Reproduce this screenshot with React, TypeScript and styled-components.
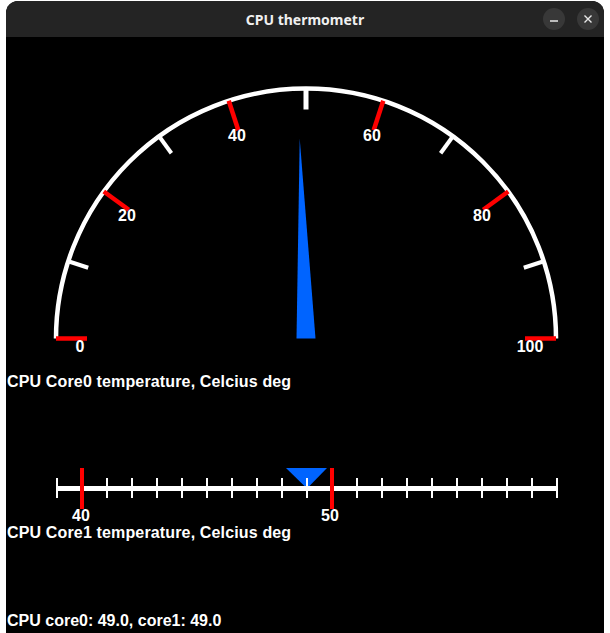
import React from 'react';
import styled, {createGlobalStyle} from 'styled-components';

const GlobalStyle = createGlobalStyle`
  html, body {
    margin: 0;
    padding: 0;
    background: #ffffff;
    height: 100%;
    overflow: hidden;
  }
  #root {
    height: 100%;
  }
`;

const Window = styled.div`
  margin: 1px 6px 0 6px;
  width: 598px;
  height: 632px;
  display: flex;
  flex-direction: column;
  background: #000000;
  border-radius: 12px 12px 0 0;
  overflow: hidden;
`;

const TitleBar = styled.div`
  position: relative;
  height: 36px;
  flex: none;
  display: flex;
  align-items: center;
  justify-content: flex-end;
  padding-right: 5px;
  gap: 12px;
  background: #242424;
  box-sizing: border-box;
`;

const Title = styled.div`
  position: absolute;
  left: 0;
  right: 0;
  top: 0;
  bottom: 0;
  display: flex;
  align-items: center;
  justify-content: center;
  font-family: 'Noto Sans', 'DejaVu Sans', sans-serif;
  font-weight: 700;
  font-size: 14px;
  color: #f0f0f0;
  pointer-events: none;
`;

const ControlButton = styled.button`
  position: relative;
  width: 22px;
  height: 22px;
  border-radius: 50%;
  border: none;
  padding: 0;
  background: #383838;
  display: flex;
  align-items: center;
  justify-content: center;
  color: #e8e8e8;
`;

const Content = styled.div`
  flex: 1;
  display: flex;
  flex-direction: column;
  background: #000000;
`;

const Canvas = styled.svg<{$h: number}>`
  display: block;
  width: 598px;
  height: ${p => p.$h}px;
  flex: none;
  overflow: visible;
`;

const Caption = styled.div<{$gap?: number}>`
  margin-top: ${p => p.$gap ?? 0}px;
  padding-left: 1px;
  height: 18px;
  line-height: 18px;
  font-family: 'Liberation Sans', Arial, sans-serif;
  font-weight: 700;
  font-size: 16px;
  letter-spacing: 0.15px;
  color: #ffffff;
  white-space: nowrap;
`;

const Status = styled(Caption)`
  letter-spacing: 0;
`;

const Label = styled.text`
  font-family: 'Liberation Sans', Arial, sans-serif;
  font-weight: 700;
  font-size: 16px;
  fill: #ffffff;
`;

const CX = 306;
const CY = 338.5;
const R = 250;
const BLUE = '#0064ff';
const RED = '#ff0000';

const polar = (value: number, r: number) => {
  const a = ((180 - value * 1.8) * Math.PI) / 180;
  return {x: CX + r * Math.cos(a), y: CY - r * Math.sin(a)};
};

const gaugeLabels = [
  {v: 0, x: 80, y: 352},
  {v: 20, x: 127, y: 221},
  {v: 40, x: 237, y: 141},
  {v: 60, x: 372, y: 141},
  {v: 80, x: 482, y: 221},
  {v: 100, x: 530, y: 352},
];

const Gauge: React.FC<{value: number}> = ({value}) => {
  const tip = polar(value, 200);
  const ticks = [0, 10, 20, 30, 40, 50, 60, 70, 80, 90, 100];
  return (
    <Canvas $h={336} viewBox="6 37 598 336">
      <path
        d={`M ${CX - R} ${CY} A ${R} ${R} 0 0 1 ${CX + R} ${CY}`}
        fill="none"
        stroke="#ffffff"
        strokeWidth={4.5}
      />
      {ticks.map(t => {
        const major = t % 20 === 0;
        const a = polar(t, R);
        const b = polar(t, major ? R - 31 : R - 21);
        return (
          <line
            key={t}
            x1={a.x}
            y1={a.y}
            x2={b.x}
            y2={b.y}
            stroke={major ? RED : '#ffffff'}
            strokeWidth={major ? 4.5 : t === 50 ? 5 : 4}
          />
        );
      })}
      {gaugeLabels.map(l => (
        <Label key={l.v} x={l.x} y={l.y} textAnchor="middle">
          {l.v}
        </Label>
      ))}
      <polygon
        points={`${CX - 9.5},${CY} ${CX + 9.5},${CY} ${tip.x},${tip.y}`}
        fill={BLUE}
      />
    </Canvas>
  );
};

const LinearScale: React.FC<{value: number}> = ({value}) => {
  const x0 = 57;
  const step = 25;
  const min = 39;
  const lineY = 488.5;
  const px = x0 + (value - min) * step;
  const ticks = Array.from({length: 21}, (_, i) => min + i);
  return (
    <Canvas $h={133} viewBox="6 391 598 133">
      <polygon
        points={`${px - 21},468 ${px + 20},468 ${px},${lineY}`}
        fill={BLUE}
      />
      <line
        x1={x0}
        y1={lineY}
        x2={x0 + 20 * step}
        y2={lineY}
        stroke="#ffffff"
        strokeWidth={5}
      />
      {ticks.map((t, i) => {
        const x = x0 + i * step;
        const major = t % 10 === 0;
        return major ? (
          <line key={t} x1={x} y1={468} x2={x} y2={509} stroke={RED} strokeWidth={4} />
        ) : (
          <line key={t} x1={x} y1={478} x2={x} y2={498} stroke="#ffffff" strokeWidth={2} />
        );
      })}
      <Label x={81} y={521} textAnchor="middle">
        40
      </Label>
      <Label x={330} y={521} textAnchor="middle">
        50
      </Label>
    </Canvas>
  );
};

export default function App() {
  const core0 = 49.0;
  const core1 = 49.0;
  return (
    <>
      <GlobalStyle />
      <Window>
        <TitleBar>
          <Title>CPU thermometr</Title>
          <ControlButton aria-label="minimize">
            <svg width="10" height="10" viewBox="0 0 10 10">
              <line x1="1" y1="7" x2="9" y2="7" stroke="currentColor" strokeWidth="1.6" />
            </svg>
          </ControlButton>
          <ControlButton aria-label="close">
            <svg width="10" height="10" viewBox="0 0 10 10">
              <path d="M1.5 1.5 L8.5 8.5 M8.5 1.5 L1.5 8.5" stroke="currentColor" strokeWidth="1.4" />
            </svg>
          </ControlButton>
        </TitleBar>
        <Content>
          <Gauge value={core0} />
          <Caption>CPU Core0 temperature, Celcius deg</Caption>
          <LinearScale value={core1} />
          <Caption>CPU Core1 temperature, Celcius deg</Caption>
          <Status $gap={70}>
            CPU core0: {core0.toFixed(1)}, core1: {core1.toFixed(1)}
          </Status>
        </Content>
      </Window>
    </>
  );
}
